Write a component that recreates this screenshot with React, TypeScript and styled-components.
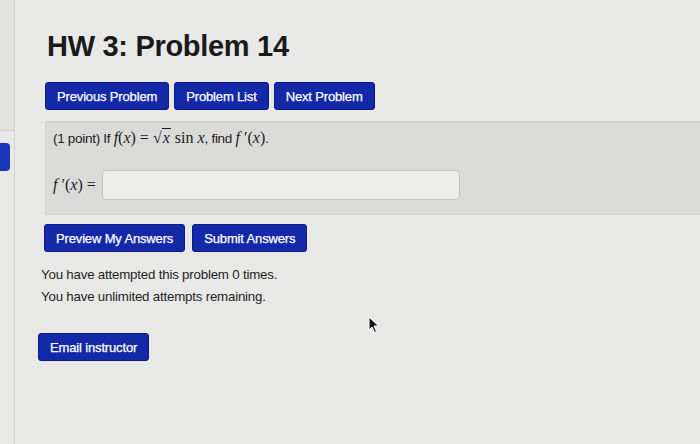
import styled, { createGlobalStyle } from 'styled-components';

const Global = createGlobalStyle`
  html, body {
    margin: 0;
    padding: 0;
    background: #e8e8e6;
  }
  body {
    font-family: "Liberation Sans", Arial, sans-serif;
    color: #1c1c1c;
    overflow: hidden;
  }
`;

const Page = styled.div`
  display: flex;
  width: 700px;
  height: 444px;
  overflow: hidden;
  background: #e8e8e6;
`;

const Sidebar = styled.aside`
  width: 14px;
  flex-shrink: 0;
  border-right: 1px solid #d2d2d0;
  display: flex;
  flex-direction: column;
`;

const SidePanel = styled.div`
  height: 130px;
  background: #e1e1df;
  border-bottom: 1px solid #d0d0ce;
`;

const SideTab = styled.div`
  margin-top: 12px;
  width: 10px;
  height: 28px;
  background: #1a36b8;
  border-radius: 0 4px 4px 0;
`;

const Main = styled.main`
  flex: 1;
  min-width: 0;
  padding: 30px 0 0 30px;
  position: relative;
`;

const Title = styled.h1`
  margin: 0 0 0 2px;
  font-size: 29px;
  font-weight: bold;
  line-height: 32px;
  color: #1a1a1a;
  letter-spacing: -0.3px;
`;

const ButtonRow = styled.div`
  display: flex;
  gap: 5px;
  margin-top: 20px;
`;

const Button = styled.button`
  font-family: "Liberation Sans", Arial, sans-serif;
  font-size: 13px;
  letter-spacing: -0.15px;
  color: #fff;
  -webkit-text-stroke: 0.25px #fff;
  background: #1429a8;
  border: 1px solid #0c1c85;
  border-radius: 3px;
  height: 28px;
  padding: 0 11px;
  cursor: pointer;
`;

const ProblemBox = styled.section`
  margin-top: 11px;
  height: 94px;
  background: #dadad9;
  border-top: 1px solid #c9c9c7;
  border-left: 1px solid #d0d0ce;
  border-bottom: 1px solid #cfcfcd;
  padding: 6px 0 0 7px;
  box-sizing: border-box;
`;

const Prompt = styled.p`
  margin: 0;
  font-size: 13.5px;
  line-height: 20px;
  letter-spacing: -0.3px;
`;

const M = styled.span`
  font-family: "Liberation Serif", "Times New Roman", serif;
  font-style: italic;
  font-size: 16px;
  letter-spacing: 0;
`;

const Up = styled.span`
  font-family: "Liberation Serif", "Times New Roman", serif;
  font-style: normal;
  font-size: 16px;
  letter-spacing: 0;
`;

const Sqrt = styled.span`
  font-family: "Liberation Serif", "Times New Roman", serif;
  font-size: 16px;
  letter-spacing: 0;
  & > span {
    border-top: 1px solid #1c1c1c;
    font-style: italic;
    padding: 0 1px;
  }
`;

const AnswerRow = styled.div`
  display: flex;
  align-items: center;
  gap: 6px;
  margin-top: 21px;
`;

const AnswerInput = styled.input`
  width: 358px;
  height: 30px;
  box-sizing: border-box;
  background: #ececeb;
  border: 1px solid #c4c4c2;
  border-radius: 4px;
  outline: none;
`;

const Actions = styled.div`
  display: flex;
  gap: 7px;
  margin-top: 9px;
  margin-left: -1px;
`;

const Info = styled.p`
  margin: 12px 0 0 -4px;
  font-size: 13.3px;
  line-height: 22px;
  letter-spacing: -0.2px;
  color: #1f1f1f;
`;

const EmailButton = styled(Button)`
  margin: 25px 0 0 -7px;
`;

const Cursor = styled.svg`
  position: absolute;
  left: 353px;
  top: 316px;
`;

export default function App() {
  return (
    <>
      <Global />
      <Page>
        <Sidebar>
          <SidePanel />
          <SideTab />
        </Sidebar>
        <Main>
          <Title>HW 3: Problem 14</Title>
          <ButtonRow>
            <Button>Previous Problem</Button>
            <Button>Problem List</Button>
            <Button>Next Problem</Button>
          </ButtonRow>
          <ProblemBox>
            <Prompt>
              (1 point) If <M>f</M>
              <Up>(</Up>
              <M>x</M>
              <Up>) = </Up>
              <Sqrt>
                √<span>x</span>
              </Sqrt>
              <Up> sin </Up>
              <M>x</M>, find <M>f</M>
              <Up> ′(</Up>
              <M>x</M>
              <Up>)</Up>.
            </Prompt>
            <AnswerRow>
              <Prompt>
                <M>f</M>
                <Up> ′(</Up>
                <M>x</M>
                <Up>) =</Up>
              </Prompt>
              <AnswerInput aria-label="answer" />
            </AnswerRow>
          </ProblemBox>
          <Actions>
            <Button>Preview My Answers</Button>
            <Button>Submit Answers</Button>
          </Actions>
          <Info>
            You have attempted this problem 0 times.
            <br />
            You have unlimited attempts remaining.
          </Info>
          <EmailButton>Email instructor</EmailButton>
          <Cursor width="12" height="18" viewBox="0 0 12 18">
            <path d="M1 1 L1 14 L4 11 L6.5 16.5 L8.5 15.5 L6 10 L10.5 10 Z" fill="#111" stroke="#fff" strokeWidth="1" />
          </Cursor>
        </Main>
      </Page>
    </>
  );
}
